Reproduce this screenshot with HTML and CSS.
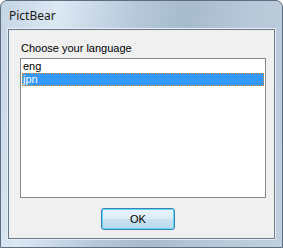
FILE: index.html
```html
<!DOCTYPE html>
<html lang="en">

<head>
	<meta charset="UTF-8">
	<title>PictBear</title>
	<link rel="stylesheet" href="styles.css">
</head>

<body>
	<div class="window">
		<div class="titlebar">PictBear</div>
		<div class="client">
			<div class="label">Choose your language</div>
			<div class="listbox">
				<div class="item">eng</div>
				<div class="item selected">jpn</div>
			</div>
			<div class="actions">
				<button class="btnOk">OK</button>
			</div>
		</div>
	</div>
</body>

</html>
```

FILE: styles.css
```css
body {
	margin: 0;
	background: #ffffff;
}

.window {
	width: 283px;
	height: 248px;
	box-sizing: border-box;
	padding: 0 7px 8px 7px;
	border: 1px solid #5d6e80;
	border-radius: 7px 7px 0 0;
	background: linear-gradient(100deg, #c4d4e4 0%, #dce8f4 18%, #b6c8da 42%, #a8bbce 58%, #b9c9d9 80%, #c0cfde 100%);
	display: flex;
	flex-direction: column;
}

.titlebar {
	height: 28px;
	box-sizing: border-box;
	padding: 6px 0 0 1px;
	font-family: "Noto Sans", "DejaVu Sans", sans-serif;
	font-size: 12px;
	color: #1a1a1a;
}

.client {
	flex: 1;
	background: #f0f0f0;
	border: 1px solid #6b7a89;
	box-shadow: 0 0 0 1px #e6edf4;
	display: flex;
	flex-direction: column;
	padding: 11px 10px 0 11px;
}

.label {
	font-family: "Liberation Sans", Arial, sans-serif;
	font-size: 11px;
	line-height: 15px;
	color: #000;
	padding-left: 1px;
	margin-bottom: 2px;
}

.listbox {
	width: 246px;
	height: 140px;
	box-sizing: border-box;
	border: 1px solid #828790;
	background: #ffffff;
	padding: 1px;
}

.item {
	height: 13px;
	line-height: 13px;
	padding-left: 1px;
	font-family: "Liberation Sans", Arial, sans-serif;
	font-size: 11px;
	color: #000;
}

.item.selected {
	background: #3399ff;
	color: #ffffff;
	outline: 1px dotted #e88a2a;
	outline-offset: -1px;
}

.actions {
	display: flex;
	justify-content: center;
	padding-top: 10px;
	padding-right: 8px;
}

.btnOk {
	width: 74px;
	height: 22px;
	border: 1px solid #3c7fb1;
	border-radius: 3px;
	box-shadow: inset 0 0 0 1px #5fd8f8;
	background: linear-gradient(#e8f4fb 0%, #dcedf6 48%, #c8e2f0 52%, #b9d9ec 100%);
	font-family: "Liberation Sans", Arial, sans-serif;
	font-size: 11px;
	color: #000;
	padding: 0;
}
```
